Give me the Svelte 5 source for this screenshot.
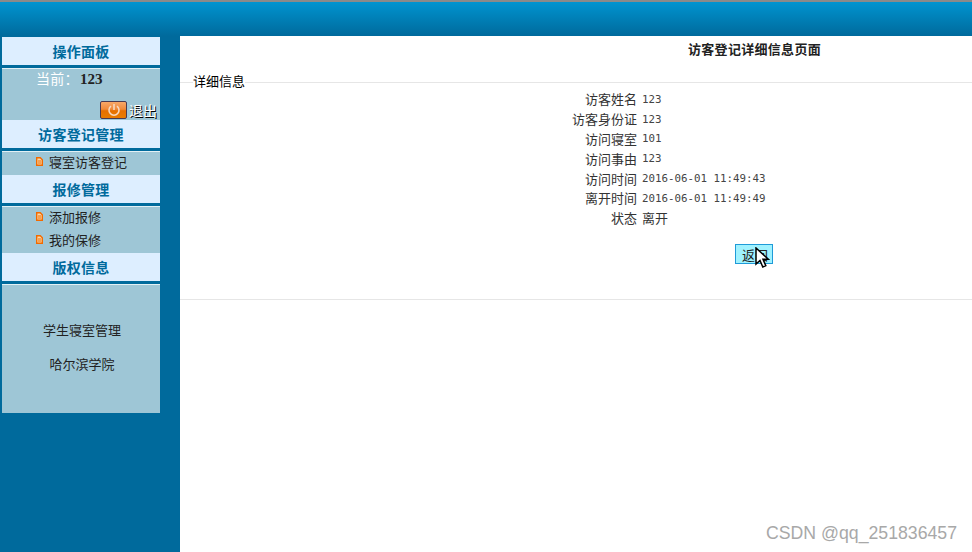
<script>
  const rows = [
    ['访客姓名', '123'],
    ['访客身份证', '123'],
    ['访问寝室', '101'],
    ['访问事由', '123'],
    ['访问时间', '2016-06-01 11:49:43'],
    ['离开时间', '2016-06-01 11:49:49'],
    ['状态', '离开']
  ];
  const sections = [
    { title: '访客登记管理', items: ['寝室访客登记'] },
    { title: '报修管理', items: ['添加报修', '我的保修'] }
  ];
</script>

<div class="page">
  <header class="top"></header>
  <div class="body">
    <aside class="side">
      <h2 class="head">操作面板</h2>
      <div class="panel user">
        <p class="who">当前：<b>123</b></p>
        <div class="logout">
          <span class="power">
            <svg width="16" height="14" viewBox="0 0 16 14" fill="none" stroke="#f7d9c0" stroke-width="1.6">
              <path d="M5 3.2a5 5 0 1 0 6 0" />
              <path d="M8 1v6" />
            </svg>
          </span>
          <span class="exit">退出</span>
        </div>
      </div>
      {#each sections as s}
        <h2 class="head">{s.title}</h2>
        <ul class="panel menu">
          {#each s.items as it}
            <li>
              <svg class="doc" width="7" height="9" viewBox="0 0 7 9" fill="#fbd9a8" stroke="#f26a00" stroke-width="1.4">
                <path d="M.7.7h3.6l2 2v5.6H.7z" />
                <path d="M2 4h3M2 6h3" stroke-width="1" />
              </svg>
              {it}
            </li>
          {/each}
        </ul>
      {/each}
      <h2 class="head">版权信息</h2>
      <div class="panel about">
        <p>学生寝室管理</p>
        <p>哈尔滨学院</p>
      </div>
    </aside>
    <main class="main">
      <h1 class="title">访客登记详细信息页面</h1>
      <fieldset class="box">
        <legend>详细信息</legend>
        <div class="grid">
          {#each rows as r}
            <div class="label">{r[0]}</div>
            <div class="value">{r[1]}</div>
          {/each}
        </div>
        <div class="actions">
          <button class="back">返回</button>
          <svg class="cursor" width="15" height="22" viewBox="0 0 15 22">
            <path d="M1 1v16l4-3.6 2.8 6.6 3-1.3-2.8-6.4h5.4z" fill="#fff" stroke="#000" stroke-width="1.5" stroke-linejoin="miter" />
          </svg>
        </div>
      </fieldset>
    </main>
  </div>
  <div class="mark">CSDN @qq_251836457</div>
</div>

<style>
  :global(body) {
    margin: 0;
    background: #fff;
  }
  .page {
    position: relative;
    width: 972px;
    height: 552px;
    overflow: hidden;
    font-family: "Noto Sans CJK SC", "Liberation Sans", sans-serif;
    font-size: 13px;
    color: #222;
  }
  .top {
    height: 34px;
    border-top: 2px solid #8a8a8a;
    background: linear-gradient(#0094d0, #006a9c);
  }
  .body {
    display: grid;
    grid-template-columns: 180px 1fr;
    height: 516px;
  }
  .side {
    background: #006a9c;
    padding: 1px 20px 0 2px;
  }
  .head {
    margin: 0;
    height: 28px;
    line-height: 28px;
    background: #ddeeff;
    color: #006a9c;
    font-size: 14px;
    letter-spacing: 0.3px;
    font-weight: 700;
    text-align: center;
  }
  .panel {
    margin: 3px 0 0;
    background: #9ec6d6;
    border-top: 1px solid #e2f0f5;
    box-sizing: border-box;
  }
  .user {
    height: 52px;
    position: relative;
  }
  .who {
    margin: -1px 0 0;
    padding-left: 34px;
    line-height: 20px;
    color: #fff;
    font-size: 14px;
    letter-spacing: 0.3px;
  }
  .who b {
    margin-left: 1px;
    font-family: "Liberation Serif", serif;
    font-size: 15px;
    letter-spacing: 0;
    color: #222;
  }
  .logout {
    position: absolute;
    right: 3px;
    bottom: 1px;
    display: flex;
    align-items: center;
    gap: 2px;
  }
  .power {
    box-sizing: border-box;
    width: 27px;
    height: 18px;
    display: flex;
    align-items: center;
    justify-content: center;
    border: 1px solid #4a3a50;
    border-radius: 2px;
    background: linear-gradient(#f8a868 0, #f08a3a 45%, #e67000 55%, #e87c00 100%);
  }
  .exit {
    color: #fff;
    font-size: 14px;
    line-height: 18px;
    text-shadow: 1px 1px 0 #000;
  }
  .menu {
    padding: 0;
    list-style: none;
  }
  .menu li {
    box-sizing: border-box;
    display: flex;
    align-items: center;
    height: 23px;
    padding: 0 0 5px 34px;
    color: #222;
    font-size: 13px;
  }
  .doc {
    margin-right: 6px;
    flex: none;
  }
  .about {
    height: 129px;
    padding: 36px 0 0 2px;
    text-align: center;
  }
  .about p {
    margin: 0 0 16px;
    line-height: 18px;
  }
  .main {
    min-width: 0;
    background: #fff;
  }
  .title {
    margin: 0;
    padding: 4px 0 0 508px;
    height: 22px;
    line-height: 18px;
    font-size: 13px;
    letter-spacing: 0.3px;
    font-weight: 700;
    color: #222;
  }
  .box {
    margin: 12px 0 0;
    padding: 0;
    border: 0;
    border-top: 1px solid #e6e6e6;
    border-bottom: 1px solid #e6e6e6;
    min-width: 0;
    height: 226px;
    box-sizing: border-box;
  }
  legend {
    margin-left: 13px;
    padding: 0 0 2px;
    font-size: 13px;
    line-height: 14px;
    color: #000;
  }
  .grid {
    display: grid;
    grid-template-columns: 457px 1fr;
    column-gap: 5px;
    grid-auto-rows: 19.8px;
    margin-top: -1px;
    align-items: center;
  }
  .label {
    text-align: right;
    color: #333;
  }
  .value {
    padding-top: 1px;
    font-family: "DejaVu Sans Mono", monospace;
    font-size: 10.8px;
    color: #444;
  }
  .value:last-child {
    padding-top: 0;
    font-family: "Noto Sans CJK SC", sans-serif;
    font-size: 13px;
    color: #333;
  }
  .actions {
    position: relative;
    margin: 16px 0 0 555px;
    width: 38px;
    height: 20px;
  }
  .back {
    box-sizing: border-box;
    width: 38px;
    height: 20px;
    padding: 0 0 0 6px;
    border: 1px solid #1f9bd8;
    background: #a0f2ff;
    font: 13px "Noto Sans CJK SC", sans-serif;
    color: #222;
    text-align: left;
    overflow: hidden;
  }
  .cursor {
    position: absolute;
    left: 20px;
    top: 3px;
  }
  .mark {
    position: absolute;
    right: 15px;
    bottom: 8px;
    font-family: "Liberation Sans", sans-serif;
    font-size: 17.7px;
    color: #a8a8a8;
  }
</style>
